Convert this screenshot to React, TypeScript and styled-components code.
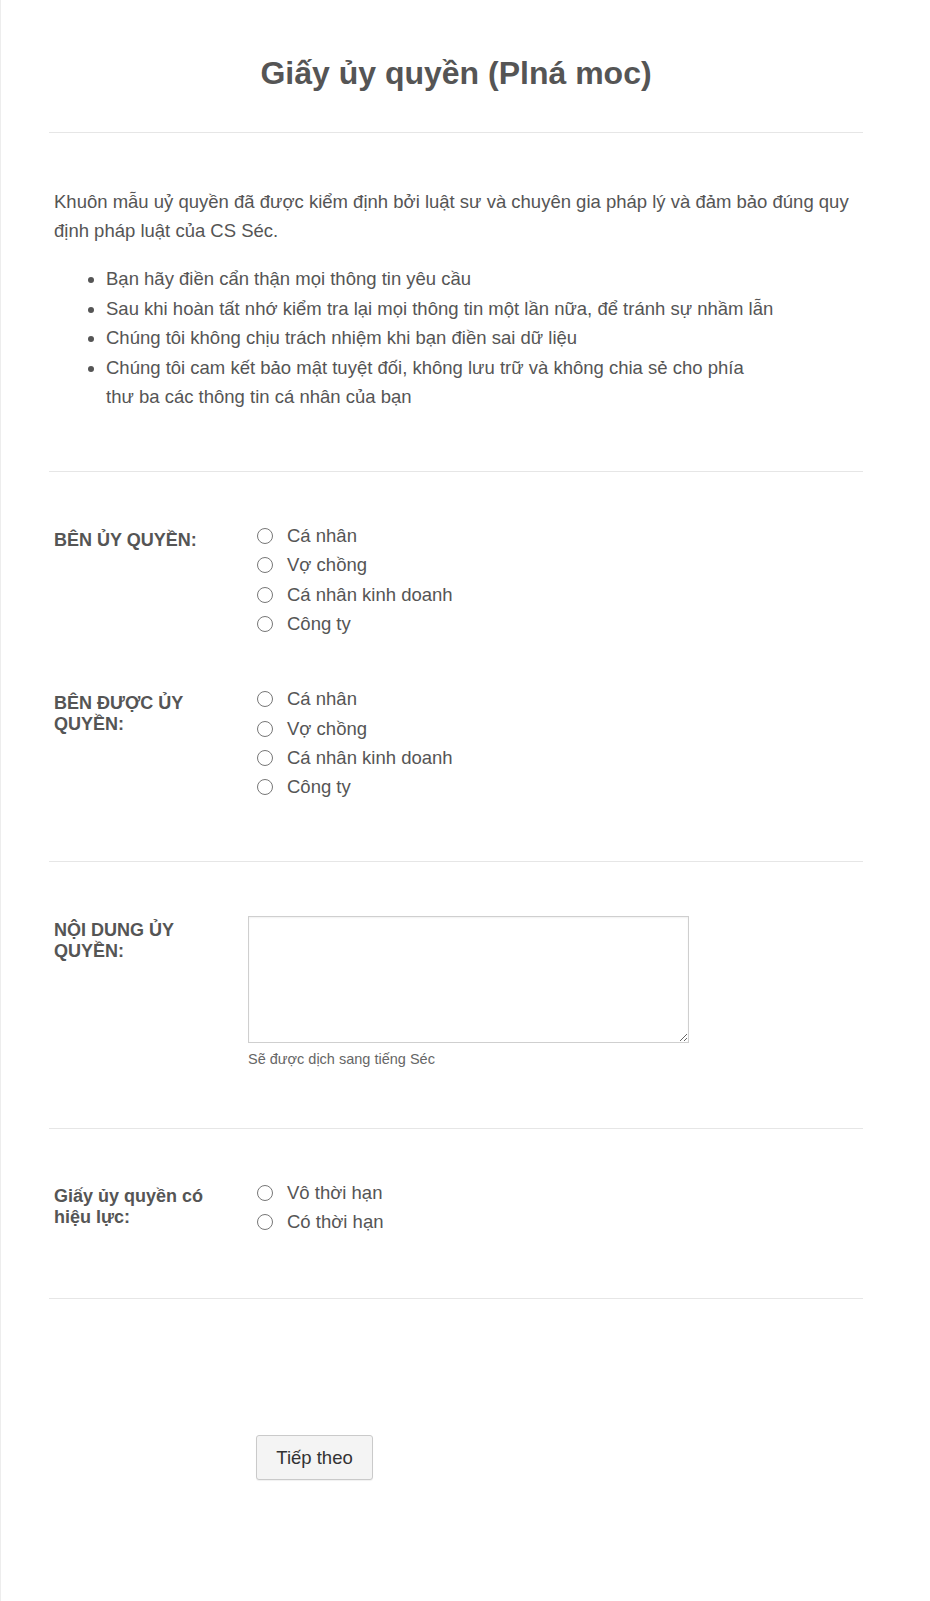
import React from "react";
import styled, { createGlobalStyle } from "styled-components";

const GlobalStyle = createGlobalStyle`
  html, body {
    margin: 0;
    padding: 0;
    background: #fff;
  }
  body {
    font-family: "Liberation Sans", Arial, sans-serif;
    color: #555;
  }
`;

const Page = styled.div`
  min-height: 1601px;
  box-sizing: border-box;
  border-left: 1px solid #ededed;
  padding: 0 67px 0 48px;
`;

const Section = styled.section<{ $top: number; $bottom: number; $last?: boolean }>`
  padding: ${({ $top, $bottom }) => `${$top}px 5px ${$bottom}px`};
  border-bottom: ${({ $last }) => ($last ? "none" : "1px solid #e6e6e6")};
`;

const Title = styled.h1`
  margin: 0;
  text-align: center;
  font-size: 32px;
  line-height: 36px;
  font-weight: bold;
  color: #555;
`;

const Intro = styled.p`
  margin: 0;
  font-size: 18.5px;
  line-height: 29px;
`;

const Bullets = styled.ul`
  margin: 19px 0 0;
  padding-left: 52px;
  font-size: 18.5px;
  line-height: 29.5px;
`;

const Field = styled.div<{ $gap?: number }>`
  display: grid;
  grid-template-columns: 194px 1fr;
  margin-top: ${({ $gap }) => $gap ?? 0}px;
`;

const Label = styled.div<{ $offset: number }>`
  padding-top: ${({ $offset }) => $offset}px;
  font-size: 18px;
  line-height: 21px;
  font-weight: bold;
  color: #555;
  max-width: 165px;
`;

const Options = styled.div`
  display: flex;
  flex-direction: column;
  padding-left: 9px;
`;

const Option = styled.label`
  display: flex;
  align-items: center;
  height: 29.3px;
  font-size: 18.5px;
  color: #555;
  cursor: pointer;
`;

const Circle = styled.input.attrs({ type: "radio" })`
  appearance: none;
  margin: 0 14px 0 0;
  width: 16px;
  height: 16px;
  border: 1px solid #777;
  border-radius: 50%;
  box-sizing: border-box;
  background: #fff;
  &:checked {
    background: radial-gradient(circle, #555 0 4px, #fff 4.5px);
  }
`;

const TextBlock = styled.div`
  display: flex;
  flex-direction: column;
`;

const Area = styled.textarea`
  width: 441px;
  height: 127px;
  box-sizing: border-box;
  border: 1px solid #cfcfcf;
  box-shadow: inset 0 1px 2px rgba(0, 0, 0, 0.06);
  font-family: inherit;
  font-size: 16px;
  padding: 6px;
  resize: both;
`;

const Help = styled.div`
  margin-top: 8px;
  font-size: 14.5px;
  line-height: 17px;
  color: #666;
`;

const Actions = styled.div`
  padding-left: 202px;
`;

const NextButton = styled.button`
  width: 117px;
  height: 45px;
  border: 1px solid #cacaca;
  border-radius: 3px;
  background: #f4f4f4;
  box-shadow: 0 1px 1px rgba(0, 0, 0, 0.06);
  font-family: inherit;
  font-size: 18.5px;
  color: #333;
  cursor: pointer;
`;

type RadioGroupProps = { name: string; items: string[] };

const RadioGroup = ({ name, items }: RadioGroupProps) => (
  <Options>
    {items.map((item) => (
      <Option key={item}>
        <Circle name={name} />
        {item}
      </Option>
    ))}
  </Options>
);

const parties = ["Cá nhân", "Vợ chồng", "Cá nhân kinh doanh", "Công ty"];

export default function App() {
  return (
    <>
      <GlobalStyle />
      <Page>
        <Section $top={55} $bottom={41}>
          <Title>Giấy ủy quyền (Plná moc)</Title>
        </Section>

        <Section $top={54} $bottom={59}>
          <Intro>
            Khuôn mẫu uỷ quyền đã được kiểm định bởi luật sư và chuyên gia pháp lý và đảm bảo đúng quy
            định pháp luật của CS Séc.
          </Intro>
          <Bullets>
            <li>Bạn hãy điền cẩn thận mọi thông tin yêu cầu</li>
            <li>Sau khi hoàn tất nhớ kiểm tra lại mọi thông tin một lần nữa, để tránh sự nhầm lẫn</li>
            <li>Chúng tôi không chịu trách nhiệm khi bạn điền sai dữ liệu</li>
            <li>
              Chúng tôi cam kết bảo mật tuyệt đối, không lưu trữ và không chia sẻ cho phía
              <br />
              thư ba các thông tin cá nhân của bạn
            </li>
          </Bullets>
        </Section>

        <Section $top={50} $bottom={59}>
          <Field>
            <Label $offset={8}>BÊN ỦY QUYỀN:</Label>
            <RadioGroup name="ben-uy-quyen" items={parties} />
          </Field>
          <Field $gap={46}>
            <Label $offset={8}>BÊN ĐƯỢC ỦY QUYỀN:</Label>
            <RadioGroup name="ben-duoc-uy-quyen" items={parties} />
          </Field>
        </Section>

        <Section $top={54} $bottom={60}>
          <Field>
            <Label $offset={4}>NỘI DUNG ỦY QUYỀN:</Label>
            <TextBlock>
              <Area />
              <Help>Sẽ được dịch sang tiếng Séc</Help>
            </TextBlock>
          </Field>
        </Section>

        <Section $top={49} $bottom={62}>
          <Field>
            <Label $offset={8}>Giấy ủy quyền có hiệu lực:</Label>
            <RadioGroup name="hieu-luc" items={["Vô thời hạn", "Có thời hạn"]} />
          </Field>
        </Section>

        <Section $top={136} $bottom={0} $last>
          <Actions>
            <NextButton type="button">Tiếp theo</NextButton>
          </Actions>
        </Section>
      </Page>
    </>
  );
}
